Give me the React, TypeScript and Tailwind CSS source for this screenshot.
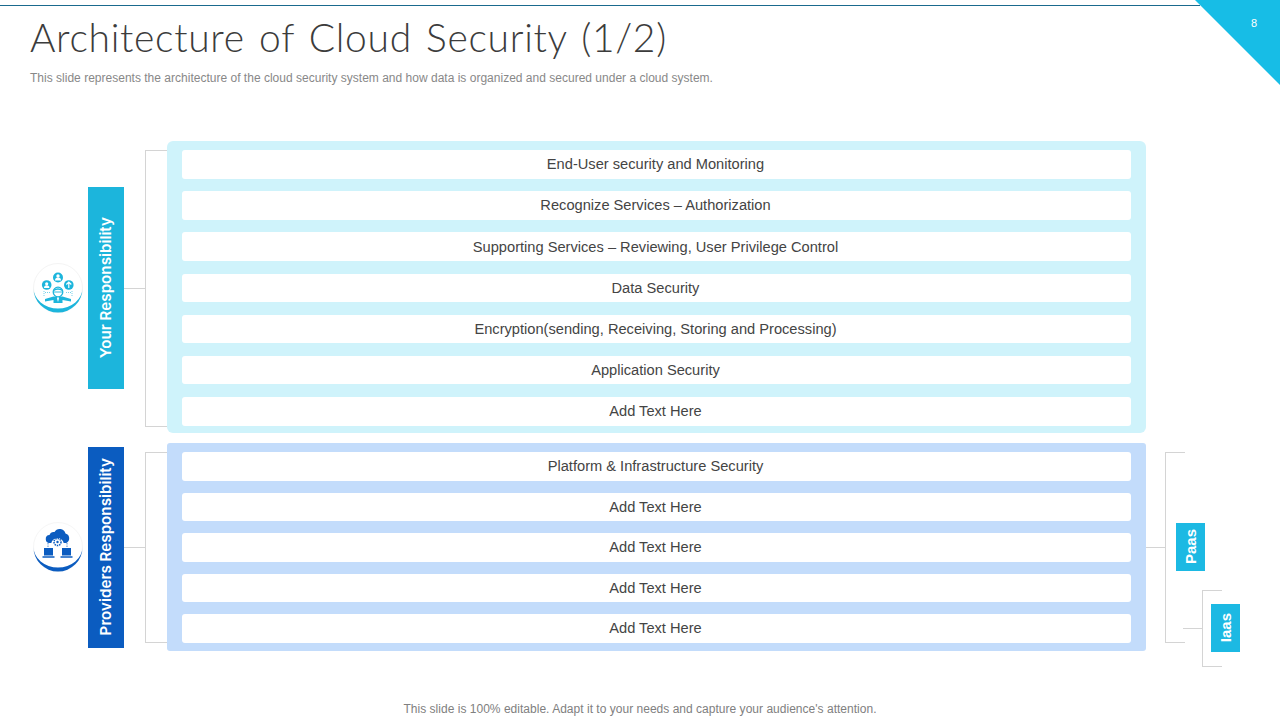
const top = ["End-User security and Monitoring","Recognize Services – Authorization","Supporting Services – Reviewing, User Privilege Control","Data Security","Encryption(sending, Receiving, Storing and Processing)","Application Security","Add Text Here"];
const bottom = ["Platform & Infrastructure Security","Add Text Here","Add Text Here","Add Text Here","Add Text Here"];

function UserIcon() {
  const c = "#1cb5dc";
  return (
    <svg width="52" height="52" viewBox="0 0 52 52" className="mt-[2px] shrink-0">
      <circle cx="26" cy="26" r="24.5" fill="#fff" stroke="#f4f4f4" />
      <path d="M1.5 26 A24.5 24.5 0 0 0 50.5 26 A24.5 20.5 0 0 1 1.5 26Z" fill={c} />
      <circle cx="26" cy="15.500" r="5" fill={c} />
      <circle cx="26" cy="14" r="1.700" fill="#fff" />
      <path d="M23 18.500a3 3 0 0 1 6 0z" fill="#fff" />
      <circle cx="14.700" cy="23" r="4.800" fill={c} />
      <circle cx="14.700" cy="21.800" r="1.600" fill="#fff" />
      <path d="M12 26a2.700 2.700 0 0 1 5.400 0z" fill="#fff" />
      <circle cx="36.800" cy="23" r="4.800" fill={c} />
      <path d="M36.800 20v6M34.300 22.500l2.500-2.500 2.500 2.500" stroke="#fff" strokeWidth="1.200" fill="none" />
      <circle cx="26" cy="30" r="4.800" fill="none" stroke={c} strokeWidth="1.300" />
      <path d="M21.500 28.500q4.500-3 9 0" stroke={c} strokeWidth="1.500" fill="none" />
      <path d="M22 30h8" stroke={c} strokeWidth="0.900" />
      <path d="M13 37l8.500-2.500h9L39 37v2.500l-8.500-1.500v3h-9v-3L13 39.500z" fill={c} />
      <path d="M26 34.500l-1 2 1 3.500 1-3.500z" fill="#fff" />
      <path d="M12 29v6M40 29v6M13 30.500h5M34 30.500h5" stroke={c} strokeWidth="0.600" strokeDasharray="1 1" />
    </svg>
  );
}

function CloudIcon() {
  const c = "#0b5cc0";
  return (
    <svg width="52" height="52" viewBox="0 0 52 52" className="shrink-0">
      <circle cx="26" cy="26" r="24.500" fill="#fff" stroke="#f6f6f6" />
      <path d="M1.500 26 A24.500 24.500 0 0 0 50.500 26 A24.500 20.500 0 0 1 1.500 26Z" fill={c} />
      <path d="M18 22a4 4 0 0 1-.500-8 4.500 4.500 0 0 1 5-3 6 6 0 0 1 11 1.500 5 5 0 0 1 .500 9.500h-2a7 7 0 0 0-13 0z" fill={c} />
      <circle cx="25.500" cy="21" r="4" fill="#fff" />
      <circle cx="25.500" cy="21" r="3.500" fill="none" stroke={c} strokeWidth="1.500" strokeDasharray="1.500 .8" />
      <circle cx="25.500" cy="21" r="1.200" fill={c} />
      <path d="M20 21h-4v5M31 21h4v5" fill="none" stroke={c} strokeWidth="0.700" strokeDasharray="1.500 1" />
      <path d="M12 27h9v7.500h-9zM30 27h9v7.500h-9z" fill={c} />
      <path d="M10.500 35.300h12v1.500h-12zM28.500 35.300h12v1.500h-12z" fill={c} />
    </svg>
  );
}

function Stem({ className }: { className: string }) {
  return <div className={"h-px bg-[#d4d4d4] " + className} />;
}

function Rows({ items, gap }: { items: string[]; gap: string }) {
  return (
    <div className={"flex flex-col " + gap}>
      {items.map((t, i) => (
        <div key={i} className="flex h-[28.500px] items-center justify-center rounded-[3px] bg-white pr-[2px] pt-[2px] text-[14.650px] text-[#444444]">
          {t}
        </div>
      ))}
    </div>
  );
}

function Label({ text, bg, h }: { text: string; bg: string; h: string }) {
  return (
    <div className={"flex w-9 items-center justify-center " + bg + " " + h}>
      <span className="rotate-180 whitespace-nowrap text-[15.200px] font-semibold text-white [font-family:Inter,sans-serif] [writing-mode:vertical-rl]">{text}</span>
    </div>
  );
}

function Small({ text }: { text: string }) {
  return (
    <div className="flex h-12 w-[29px] items-center justify-center bg-[#1cb9e3] pl-[1px]">
      <span className="rotate-180 text-[15px] font-bold text-white [writing-mode:vertical-rl]">{text}</span>
    </div>
  );
}

export default function App() {
  return (
    <div className="relative h-[720px] w-[1280px] overflow-hidden bg-white [font-family:'Liberation_Sans',Arial,sans-serif]">
      <div className="absolute left-0 top-[5px] h-px w-[1200px] bg-[#1a6a8e]" />
      <svg className="absolute right-0 top-0" width="85" height="85" viewBox="0 0 85 85">
        <polygon points="0,0 85,0 85,85" fill="#17bde6" />
      </svg>
      <div className="absolute left-[1251px] top-[15px] text-[11px] text-white">8</div>

      <div className="flex h-full flex-col">
        <h1 className="ml-[30px] mt-[12px] h-[50px] whitespace-nowrap text-[39px] font-light leading-[50px] tracking-[0.69px] text-[#3c3c3c] [font-family:Lato,sans-serif] [word-spacing:3px]">
          Architecture of Cloud Security (1/2)
        </h1>
        <p className="ml-[30px] mt-[8px] h-[16px] text-[12px] leading-[16px] tracking-[0.01px] text-[#888888]">
          This slide represents the architecture of the cloud security system and how data is organized and secured under a cloud system.
        </p>

        <div className="ml-[32px] mt-[55px] flex h-[292px] items-center">
          <UserIcon />
          <div className="ml-1 mt-[2px]"><Label text="Your Responsibility" bg="bg-[#1cb5dc]" h="h-[202px]" /></div>
          <div className="mt-[2px] flex w-[43px] items-center">
            <Stem className="flex-1" />
            <div className="h-[277px] w-[22px] border-y border-l border-[#d4d4d4]" />
          </div>
          <div className="h-full w-[979px] rounded-md bg-[#cff3fb] px-[15px] pt-[9px]">
            <Rows items={top} gap="gap-[12.700px]" />
          </div>
        </div>

        <div className="ml-[32px] mt-[10px] flex h-[208px] items-center">
          <CloudIcon />
          <div className="ml-1"><Label text="Providers Responsibility" bg="bg-[#0b5cc0]" h="h-[201px]" /></div>
          <div className="flex w-[43px] items-center">
            <Stem className="flex-1" />
            <div className="h-[191px] w-[22px] border-y border-l border-[#d4d4d4]" />
          </div>
          <div className="h-full w-[979px] rounded-[3px] bg-[#c3dcfb] px-[15px] pt-[9px]">
            <Rows items={bottom} gap="gap-[12px]" />
          </div>
          <div className="flex w-[39px] items-center">
            <Stem className="w-[19px]" />
            <div className="relative h-[191px] w-5 border-y border-l border-[#d4d4d4]">
              <div className="absolute left-[10px] top-[70px]"><Small text="Paas" /></div>
              <div className="absolute left-[17px] top-[137px] flex items-center">
                <Stem className="w-[19px]" />
                <div className="h-[77px] w-5 border-y border-l border-[#d4d4d4]" />
                <div className="-ml-[11px]"><Small text="Iaas" /></div>
              </div>
            </div>
          </div>
        </div>

        <p className="mt-[50px] text-center text-[12px] leading-[16px] tracking-[0.02px] text-[#808080]">
          This slide is 100% editable. Adapt it to your needs and capture your audience's attention.
        </p>
      </div>
    </div>
  );
}
